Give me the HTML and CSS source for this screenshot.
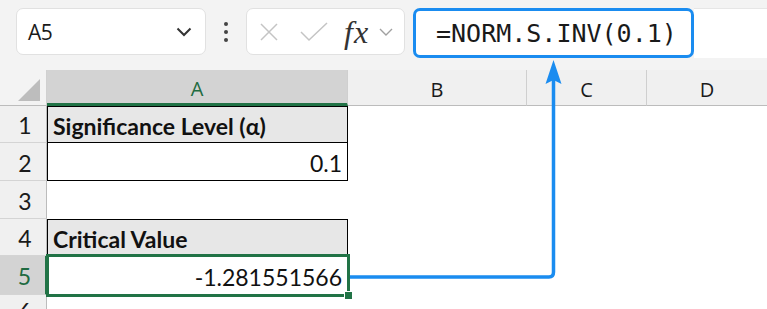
FILE: index.html
```html
<!DOCTYPE html>
<html>
   <head>
      <meta charset="utf-8">
      <link rel="stylesheet" href="styles.css">
   </head>
   <body>
      <div class="page">

         <!-- Formula bar -->
         <div class="toolbar">
            <div class="namebox">
               <span class="name">A5</span>
               <svg class="chevron" width="16" height="10" viewBox="0 0 16 10">
                  <path d="M1.5,1.5 L8,8 L14.5,1.5" />
               </svg>
            </div>
            <div class="grip">
               <svg width="6" height="22" viewBox="0 0 6 22">
                  <circle cx="3" cy="3" r="2" />
                  <circle cx="3" cy="11" r="2" />
                  <circle cx="3" cy="19" r="2" />
               </svg>
            </div>
            <div class="fxbox">
               <svg class="cancel" width="20" height="20" viewBox="0 0 20 20">
                  <path d="M2,2 L18,18 M18,2 L2,18" />
               </svg>
               <svg class="enter" width="30" height="20" viewBox="0 0 30 20">
                  <path d="M2,10 L10,18 L28,1" />
               </svg>
               <span class="fx">fx</span>
               <svg class="chevron small" width="14" height="8" viewBox="0 0 14 8">
                  <path d="M1,1 L7,7 L13,1" />
               </svg>
            </div>
            <div class="formula">
               <div class="formula-text">=NORM.S.INV(0.1)</div>
            </div>
            <div class="formula-rest"></div>
         </div>

         <!-- Sheet -->
         <div class="sheet">
            <div class="corner"><span class="corner-tri"></span></div>
            <div class="colhead selected">A</div>
            <div class="colhead">B</div>
            <div class="colhead">C</div>
            <div class="colhead last">D</div>

            <div class="rowhead">1</div>
            <div class="cell title boxed top">Significance Level (α)</div>
            <div class="cell"></div>
            <div class="cell"></div>
            <div class="cell"></div>

            <div class="rowhead">2</div>
            <div class="cell num boxed">0.1</div>
            <div class="cell"></div>
            <div class="cell"></div>
            <div class="cell"></div>

            <div class="rowhead">3</div>
            <div class="cell"></div>
            <div class="cell"></div>
            <div class="cell"></div>
            <div class="cell"></div>

            <div class="rowhead">4</div>
            <div class="cell title boxed top">Critical Value</div>
            <div class="cell"></div>
            <div class="cell"></div>
            <div class="cell"></div>

            <div class="rowhead selected">5</div>
            <div class="cell num boxed active">-1.281551566</div>
            <div class="cell"></div>
            <div class="cell"></div>
            <div class="cell"></div>

            <div class="rowhead">6</div>
            <div class="cell"></div>
            <div class="cell"></div>
            <div class="cell"></div>
            <div class="cell"></div>
         </div>

         <!-- Callout arrow from A5 to the formula -->
         <svg class="callout" width="767" height="309" viewBox="0 0 767 309">
            <path class="callout-line" d="M350,277 L549,277 Q553.5,277 553.5,272 L553.5,78" />
            <path class="callout-head" d="M553.5,60 L561.5,84 L553.5,80 L545.5,84 Z" />
         </svg>

      </div>
   </body>
</html>
```

FILE: styles.css
```css
body {
   margin : 0;
   background : #ffffff;
   font-family : Lato, "Liberation Sans", sans-serif;
}

.page {
   position : relative;
   width : 767px;
   height : 309px;
   overflow : hidden;
}

/* formula bar */

.toolbar {
   display : flex;
   align-items : flex-start;
   height : 70px;
   padding : 8px 0 0 16px;
   box-sizing : border-box;
   background : #f3f3f3;
}

.namebox {
   display : flex;
   align-items : center;
   justify-content : space-between;
   width : 190px;
   height : 47px;
   box-sizing : border-box;
   padding : 0 13px 0 11px;
   background : #ffffff;
   border : 1px solid #e1e1e1;
   border-radius : 7px;
}

.name {
   font-family : "Open Sans", sans-serif;
   font-size : 21px;
   color : #1a1a1a;
   letter-spacing : -0.5px;
}

.chevron path {
   fill : none;
   stroke : #333333;
   stroke-width : 2px;
}

.chevron.small path {
   stroke : #a0a0a0;
   stroke-width : 1.4px;
}

.grip {
   display : flex;
   align-items : center;
   justify-content : center;
   width : 40px;
   height : 47px;
}

.grip circle {
   fill : #444444;
}

.fxbox {
   display : flex;
   align-items : center;
   width : 159px;
   height : 47px;
   box-sizing : border-box;
   padding-left : 12px;
   background : #ffffff;
   border : 1px solid #e1e1e1;
   border-radius : 7px;
}

.cancel path,
.enter path {
   fill : none;
   stroke : #c4c4c4;
   stroke-width : 1.5px;
}

.enter {
   margin-left : 20px;
}

.fx {
   margin-left : 15px;
   font-family : "Liberation Serif", serif;
   font-style : italic;
   font-size : 32px;
   line-height : 1;
   letter-spacing : 1px;
   color : #333333;
}

.fxbox .chevron.small {
   margin-left : 10px;
}

.formula {
   display : flex;
   align-items : center;
   width : 281px;
   height : 50px;
   margin-left : 8px;
   box-sizing : border-box;
   padding-left : 20px;
   background : #ffffff;
   border : 3px solid #1a8cf0;
   border-radius : 7px;
}

.formula-text {
   font-family : "DejaVu Sans Mono", monospace;
   font-size : 25px;
   color : #1a1a1a;
}

.formula-rest {
   flex : 1;
   height : 50px;
   background : #ffffff;
   border-top : 1px solid #e6e6e6;
   box-sizing : border-box;
}

/* sheet grid */

.sheet {
   display : grid;
   grid-template-columns : 47px 301px 179px 120px 120px;
   grid-template-rows : 36px 37px 38px 38px 37px 39px 30px;
}

.corner {
   position : relative;
   background : #f3f3f3;
   border-bottom : 1px solid #bcbcbc;
   border-right : 1px solid #d0d0d0;
}

.corner-tri {
   position : absolute;
   right : 6px;
   bottom : 4px;
   width : 0;
   height : 0;
   border-left : 22px solid transparent;
   border-bottom : 22px solid #bdbdbd;
}

.colhead {
   display : flex;
   align-items : center;
   justify-content : center;
   padding-top : 3px;
   box-sizing : border-box;
   background : #f0f0f0;
   border-bottom : 1px solid #bcbcbc;
   border-right : 1px solid #cfcfcf;
   font-family : "Open Sans", sans-serif;
   font-size : 20px;
   font-weight : 500;
   color : #1a1a1a;
}

.colhead.last {
   border-right : none;
}

.colhead.selected {
   background : #d3d3d3;
   border-bottom : 3px solid #217346;
   color : #1f6b41;
}

.rowhead {
   display : flex;
   align-items : center;
   justify-content : center;
   padding : 2px 0 0 4px;
   box-sizing : border-box;
   background : #f0f0f0;
   border-bottom : 1px solid #d4d4d4;
   border-right : 1px solid #bcbcbc;
   font-size : 23px;
   color : #1a1a1a;
}

.rowhead.selected {
   background : #d3d3d3;
   color : #1f6b41;
   border-right : 2px solid #217346;
}

.cell {
   display : flex;
   align-items : center;
   padding : 3px 5px 0 5px;
   box-sizing : border-box;
   font-size : 23px;
   color : #111111;
   white-space : nowrap;
}

.cell.boxed {
   border-left : 1px solid #000000;
   border-right : 1px solid #000000;
   border-bottom : 1px solid #000000;
}

.cell.top {
   border-top : 1px solid #000000;
}

.cell.title {
   background : #e7e7e7;
   font-weight : bold;
}

.cell.num {
   justify-content : flex-end;
}

.cell.active {
   position : relative;
}

.cell.active::before {
   content : "";
   position : absolute;
   left : -2px;
   top : -2px;
   right : -3px;
   bottom : -3px;
   border : 3px solid #217346;
}

.cell.active::after {
   content : "";
   position : absolute;
   right : -6px;
   bottom : -6px;
   width : 7px;
   height : 7px;
   background : #217346;
   border : 1px solid #ffffff;
}

/* callout */

.callout {
   position : absolute;
   left : 0;
   top : 0;
   pointer-events : none;
}

.callout-line {
   fill : none;
   stroke : #1a8cf0;
   stroke-width : 3.5px;
}

.callout-head {
   fill : #1a8cf0;
}
```
